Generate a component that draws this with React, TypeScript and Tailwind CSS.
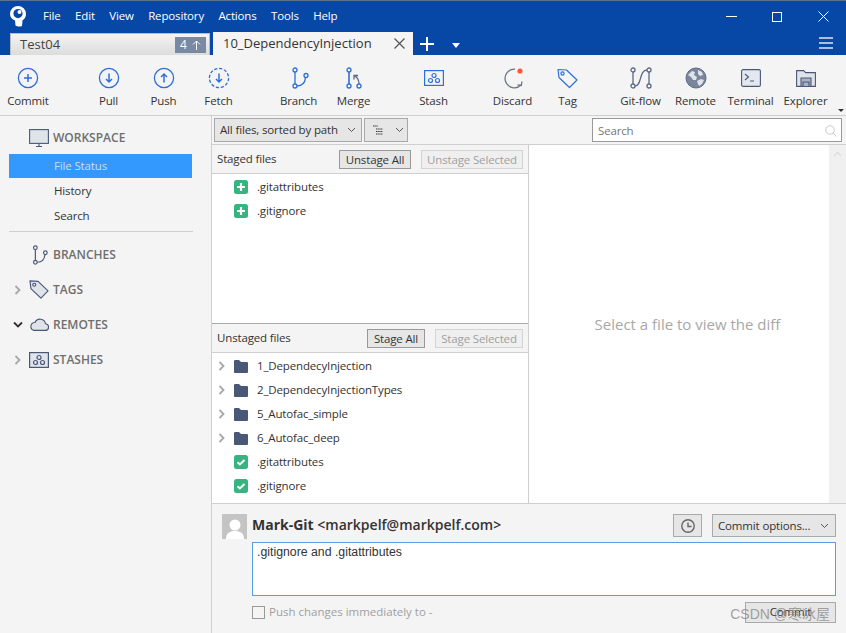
import { ReactNode } from "react";

const blue = "#2f6fd6";
const slate = "#4a5878";

function Circle({ children, dashed }: { children: ReactNode; dashed?: boolean }) {
  return (
    <svg width="22" height="22" viewBox="0 0 22 22" fill="none" stroke={blue} strokeWidth="1.3">
      <circle cx="11" cy="11" r="9.6" strokeDasharray={dashed ? "3.2 1.8" : undefined} />
      {children}
    </svg>
  );
}

function BranchIcon({ color = blue, size = 22 }: { color?: string; size?: number }) {
  return (
    <svg width={size} height={size} viewBox="0 0 22 22" fill="none" stroke={color} strokeWidth="1.3">
      <circle cx="7" cy="3" r="2" />
      <circle cx="7" cy="19" r="2" />
      <circle cx="18" cy="8.5" r="2" />
      <path d="M7 5v12M9 19c5 0 8-3 8.6-8.6" />
    </svg>
  );
}

function StashIcon({ color = blue, fill = "none" }: { color?: string; fill?: string }) {
  return (
    <svg width="20" height="16" viewBox="0 0 20 16" fill={fill} stroke={color} strokeWidth="1.2">
      <rect x="0.6" y="0.6" width="18.8" height="14.8" />
      <circle cx="10" cy="5.5" r="2" />
      <circle cx="6.5" cy="10.5" r="2" />
      <circle cx="13.5" cy="10.5" r="2" />
    </svg>
  );
}

function TagIcon({ color = blue, fill = "none" }: { color?: string; fill?: string }) {
  return (
    <svg width="21" height="21" viewBox="0 0 21 21" fill={fill} stroke={color} strokeWidth="1.2">
      <path d="M1 1.5l8.5.5 10.5 10-7.5 7.5L2 9.5z" strokeLinejoin="round" />
      <circle cx="5.5" cy="5.5" r="1.6" />
    </svg>
  );
}

function ToolItem({ icon, label, w = "w-[55px]", ml = "" }: { icon: ReactNode; label: string; w?: string; ml?: string }) {
  return (
    <div className={`${w} ${ml} flex flex-col items-center shrink-0`}>
      <div className="h-[24px] flex items-center justify-center">{icon}</div>
      <span className="mt-[3px] text-[11.5px] leading-[16px] text-[#333]">{label}</span>
    </div>
  );
}

function Btn({ children, disabled, className = "" }: { children: ReactNode; disabled?: boolean; className?: string }) {
  return (
    <div
      className={`h-[16px] box-content border flex items-center justify-center text-[11.5px] pt-[1px] ${
        disabled ? "border-[#d4d4d4] bg-[#efefef] text-[#a0a0a0]" : "border-[#999] bg-[#e6e6e6] text-[#333]"
      } ${className}`}
    >
      {children}
    </div>
  );
}

function Chevron({ open, light }: { open?: boolean; light?: boolean }) {
  return (
    <svg width="8" height="10" viewBox="0 0 8 10" fill="none" stroke={light ? "#a8a8a8" : "#333"} strokeWidth="1.8" className={open ? "rotate-90" : ""}>
      <path d="M1.5 1l4 4-4 4" />
    </svg>
  );
}

function Caret() {
  return (
    <svg width="9" height="6" viewBox="0 0 9 6" fill="none" stroke="#555" strokeWidth="1">
      <path d="M1 1l3.500 3.500L8 1" />
    </svg>
  );
}

function NavHead({ icon, label, chevron, open }: { icon: ReactNode; label: string; chevron?: boolean; open?: boolean }) {
  return (
    <div className="flex items-center h-[35px]">
      <div className="w-[29px] flex justify-center pl-[6px] shrink-0">{chevron && <Chevron open={open} light={!open} />}</div>
      <div className="w-[20px] flex justify-center shrink-0">{icon}</div>
      <span className="ml-[4px] text-[12px] tracking-normal font-semibold text-[#6f6f6f]">{label}</span>
    </div>
  );
}

function FileRow({ name, kind }: { name: string; kind: "add" | "check" | "folder" }) {
  return (
    <div className="flex items-center h-[24px] pl-[2px]">
      <div className="w-[16px] flex justify-center shrink-0">{kind === "folder" && <Chevron light />}</div>
      <div className="w-[14px] ml-[4px] flex justify-center shrink-0">
        {kind === "folder" && (
          <svg width="14" height="14" viewBox="0 0 14 14" fill={slate}>
            <path d="M0 2a1 1 0 011-1h4l2 2h6a1 1 0 011 1v9a1 1 0 01-1 1H1a1 1 0 01-1-1z" />
          </svg>
        )}
        {kind === "add" && (
          <svg width="14" height="14" viewBox="0 0 14 14">
            <rect width="14" height="14" rx="2.5" fill="#36b37e" />
            <path d="M7 3v8M3 7h8" stroke="#fff" strokeWidth="2.2" />
          </svg>
        )}
        {kind === "check" && (
          <svg width="14" height="14" viewBox="0 0 14 14" fill="none">
            <rect width="14" height="14" rx="2.5" fill="#36b37e" />
            <path d="M3.500 7.200l2.400 2.200 4.600-4.400" stroke="#fff" strokeWidth="2" />
          </svg>
        )}
      </div>
      <span className="ml-[9px] text-[11.5px] text-[#333]">{name}</span>
    </div>
  );
}

const menu = ["File", "Edit", "View", "Repository", "Actions", "Tools", "Help"];
const staged = [".gitattributes", ".gitignore"];
const folders = ["1_DependecyInjection", "2_DependecyInjectionTypes", "5_Autofac_simple", "6_Autofac_deep"];

export default function App() {
  return (
    <div className="w-[846px] h-[633px] overflow-hidden flex flex-col bg-[#f4f4f4] text-[#333] tracking-[-0.15px]" style={{ fontFamily: '"Open Sans", "Noto Sans", sans-serif' }}>
      {/* title bar */}
      <div className="h-[55px] shrink-0 bg-[#0747a6] border-t border-[#5b7391] flex flex-col">
        <div className="h-[31px] flex items-center">
          <svg width="18" height="24" viewBox="0 0 18 24" className="ml-[9px]">
            <path fill="#fff" fillRule="evenodd" d="M9 1a8 8 0 018 8c0 3-1.500 5-3.500 6.300L13 21c-2 1-5 .5-6.500-.5L6 15.600C3 14.500 1 12 1 9a8 8 0 018-8zm0 3a4.600 4.600 0 100 9.200A4.600 4.600 0 009 4z" />
            <circle cx="10.500" cy="7" r="2" fill="#fff" />
          </svg>
          <div className="flex ml-[16px] gap-[14.4px] mb-[1px] text-[11.5px] text-white">
            {menu.map((m) => (
              <span key={m}>{m}</span>
            ))}
          </div>
          <div className="ml-auto flex items-center text-white">
            <div className="w-[46px] flex justify-center">
              <div className="w-[11px] h-px bg-white mt-[-1px]" />
            </div>
            <div className="w-[46px] flex justify-center">
              <div className="w-[10px] h-[10px] border border-white" />
            </div>
            <div className="w-[46px] flex justify-center">
              <svg width="11" height="11" viewBox="0 0 11 11" stroke="#fff">
                <path d="M.5.5l10 10M10.500.5l-10 10" />
              </svg>
            </div>
          </div>
        </div>
        <div className="h-[23px] flex items-end pl-[10px]">
          <div className="w-[200px] h-[22px] bg-gradient-to-b from-[#f4f4f4] to-[#dcdcdc] border-t border-l border-r border-[#bbb] flex items-center pl-[9px] pr-[3px] text-[13px] tracking-normal text-[#444]">
            <span>Test04</span>
            <span className="ml-auto w-[31px] h-[16px] bg-[#7a89a3] text-white text-[12px] flex items-center justify-center gap-[5px]">
              4
              <svg width="9" height="10" viewBox="0 0 9 10" fill="none" stroke="#fff">
                <path d="M4.500 10V1M1 4.500l3.500-3.500L8 4.500" />
              </svg>
            </span>
          </div>
          <div className="ml-[3px] w-[200px] h-[23px] bg-[#f4f4f4] flex items-center pl-[10px] text-[13px] tracking-normal text-[#333]">
            <span>10_DependencyInjection</span>
            <svg width="11" height="11" viewBox="0 0 11 11" stroke="#555" strokeWidth="1.200" className="ml-[22px]">
              <path d="M.5.5l10 10M10.500.5l-10 10" />
            </svg>
          </div>
          <svg width="16" height="16" viewBox="0 0 16 16" stroke="#fff" strokeWidth="2" className="ml-[6px] mb-[3px]">
            <path d="M8 1v14M1 8h14" />
          </svg>
          <div className="ml-[17px] mb-[7px] w-0 h-0 border-x-[4px] border-x-transparent border-t-[5px] border-t-white" />
          <div className="ml-auto mr-[13px] mb-[6px] flex flex-col gap-[3px]">
            <div className="w-[14px] h-[2px] bg-[#a9bfe0]" />
            <div className="w-[14px] h-[2px] bg-[#a9bfe0]" />
            <div className="w-[14px] h-[2px] bg-[#a9bfe0]" />
          </div>
        </div>
      </div>

      {/* toolbar */}
      <div className="h-[61px] shrink-0 border-b border-[#cfcfcf] flex pt-[11px] relative">
        <ToolItem w="w-[56px]" label="Commit" icon={<Circle><path d="M11 7v8M7 11h8" strokeWidth="1.5" /></Circle>} />
        <ToolItem ml="ml-[25px]" label="Pull" icon={<Circle><path d="M11 6.500v8.500M8 12l3 3 3-3" strokeWidth="1.5" /></Circle>} />
        <ToolItem label="Push" icon={<Circle><path d="M11 15.500V7M8 10l3-3 3 3" strokeWidth="1.5" /></Circle>} />
        <ToolItem label="Fetch" icon={<Circle dashed><path d="M11 6.500v8.500M8 12l3 3 3-3" strokeWidth="1.5" /></Circle>} />
        <ToolItem ml="ml-[25px]" label="Branch" icon={<BranchIcon />} />
        <ToolItem
          label="Merge"
          icon={
            <svg width="22" height="22" viewBox="0 0 22 22" fill="none" stroke={blue} strokeWidth="1.3">
              <circle cx="6" cy="3" r="2" />
              <circle cx="6" cy="19" r="2" />
              <circle cx="16" cy="19" r="2" />
              <path d="M6 5v12" strokeWidth="1.6" />
              <path d="M16 17c0-4-1-6-4-8M11 12.500V8.500h4" stroke="#5b6a88" />
            </svg>
          }
        />
        <ToolItem ml="ml-[25px]" label="Stash" icon={<StashIcon />} />
        <ToolItem
          ml="ml-[24px]"
          label="Discard"
          icon={
            <svg width="22" height="22" viewBox="0 0 22 22" fill="none" stroke="#6b7488" strokeWidth="1.3">
              <path d="M13 2.200A9.300 9.300 0 1019 18" />
              <path d="M20 14.500l-.7 4-3.800-.7" />
              <circle cx="18" cy="4" r="2.600" fill="#ff5630" stroke="none" />
            </svg>
          }
        />
        <ToolItem label="Tag" icon={<TagIcon />} />
        <ToolItem
          ml="ml-[18px]"
          label="Git-flow"
          icon={
            <svg width="22" height="22" viewBox="0 0 22 22" fill="none" stroke="#5b6a88" strokeWidth="1.3">
              <circle cx="3" cy="3" r="2" />
              <circle cx="3" cy="19" r="2" />
              <circle cx="19" cy="3" r="2" />
              <circle cx="19" cy="19" r="2" />
              <path d="M3 5v12M19 5v12M5 19c7 0 4-16 12-16" />
            </svg>
          }
        />
        <ToolItem
          label="Remote"
          icon={
            <svg width="22" height="22" viewBox="0 0 22 22">
              <circle cx="11" cy="11" r="10" fill="#7b869c" stroke="#5b6a88" />
              <path fill="#dfe3ea" d="M3 8l4-4 3 1-1 3 3 2-1 3-3 0-2-3zM13 3l4 2 1 3-3 1-2-2zM12 14l4-2 3 1-2 4-3 2-1-2z" />
            </svg>
          }
        />
        <ToolItem
          label="Terminal"
          icon={
            <svg width="20" height="18" viewBox="0 0 20 18" fill="#e4e7ed" stroke="#4a5878" strokeWidth="1.1">
              <rect x="0.6" y="0.6" width="18.8" height="16.8" rx="1.5" />
              <path d="M4 5l3.500 3L4 11M9 12h4" fill="none" />
            </svg>
          }
        />
        <ToolItem
          label="Explorer"
          icon={
            <svg width="20" height="18" viewBox="0 0 20 18" fill="#dfe3ea" stroke="#4a5878" strokeWidth="1.1">
              <path d="M.6 17.400V1.600h7l2 2h9.800v13.800z" />
              <path d="M5 17V9h10v8M7 17v-4h6v4" fill="#aab2c2" />
            </svg>
          }
        />
        <div className="absolute right-[2px] bottom-[3px] w-0 h-0 border-x-[3px] border-x-transparent border-t-[3px] border-t-[#333]" />
      </div>

      <div className="flex flex-1 min-h-0">
        {/* sidebar */}
        <div className="w-[212px] shrink-0 border-r border-[#cfcfcf] pt-[8px]">
          <div className="flex items-center h-[27px] pl-[29px] mb-[3px]">
            <svg width="20" height="18" viewBox="0 0 20 18" fill="#dfe3ea" stroke={slate} strokeWidth="1.1">
              <rect x="0.6" y="0.6" width="18.8" height="13.8" />
              <path d="M7 17.500h6M10 14.500v3" fill="none" />
            </svg>
            <span className="ml-[4px] text-[12px] tracking-normal font-semibold text-[#6f6f6f]">WORKSPACE</span>
          </div>
          <div className="ml-[9px] w-[183px] h-[24px] bg-[#3399ff] flex items-center pl-[45px] text-[11.5px] text-[#c8ddf5]">File Status</div>
          <div className="ml-[54px] h-[25px] flex items-center text-[11.5px]">History</div>
          <div className="ml-[54px] h-[25px] flex items-center text-[11.5px]">Search</div>
          <div className="ml-[9px] w-[184px] h-px bg-[#cfcfcf] mt-[3px] mb-[5px]" />
          <NavHead icon={<BranchIcon color={slate} size={20} />} label="BRANCHES" />
          <NavHead chevron icon={<TagIcon color={slate} fill="#dfe3ea" />} label="TAGS" />
          <NavHead
            chevron
            open
            icon={
              <svg width="19" height="13" viewBox="0 0 19 13" fill="#dfe3ea" stroke={slate} strokeWidth="1.1">
                <path d="M4 12.400h11a3.300 3.300 0 00.5-6.600A5.500 5.500 0 005 4.500a4 4 0 00-1 7.900z" />
              </svg>
            }
            label="REMOTES"
          />
          <NavHead chevron icon={<StashIcon color={slate} fill="#dfe3ea" />} label="STASHES" />
        </div>

        {/* main */}
        <div className="flex-1 min-w-0 flex flex-col">
          <div className="h-[29px] shrink-0 flex items-center border-b border-[#cfcfcf] pl-[2px] pr-[4px]">
            <div className="h-[24px] w-[148px] border border-[#a8a8a8] bg-[#e6e6e6] flex items-center pl-[5px] text-[11.5px] whitespace-nowrap">
              All files, sorted by path
              <span className="ml-auto mr-[5px]"><Caret /></span>
            </div>
            <div className="ml-[2px] h-[24px] w-[44px] border border-[#a8a8a8] bg-[#e6e6e6] flex items-center pl-[8px]">
              <svg width="11" height="10" viewBox="0 0 11 10" stroke="#333">
                <path d="M0 1h5M3 4h7M3 6.500h7M3 9h7" strokeDasharray="1.500 0.700" />
              </svg>
              <span className="ml-[11px]"><Caret /></span>
            </div>
            <div className="ml-auto h-[24px] w-[250px] border border-[#999] bg-white flex items-center pl-[5px] pr-[4px] pt-[1px] text-[11.5px] text-[#777]">
              Search
              <svg width="12" height="12" viewBox="0 0 12 12" fill="none" stroke="#ccc" className="ml-auto">
                <circle cx="5" cy="5" r="4.300" />
                <path d="M8 8l3.500 3.500" />
              </svg>
            </div>
          </div>
          <div className="flex flex-1 min-h-0">
            <div className="w-[317px] shrink-0 border-r border-[#cfcfcf] flex flex-col">
              {/* staged */}
              <div className="h-[29px] flex items-center pl-[5px] pr-[5px] border-b border-[#cfcfcf]">
                <span className="text-[11.5px]">Staged files</span>
                <Btn className="ml-auto w-[70px]">Unstage All</Btn>
                <Btn disabled className="ml-[10px] w-[100px]">Unstage Selected</Btn>
              </div>
              <div className="h-[150px] bg-white pt-[1px] border-b border-[#aaa] box-border">
                {staged.map((f) => (
                  <FileRow key={f} name={f} kind="add" />
                ))}
              </div>
              {/* unstaged */}
              <div className="h-[29px] flex items-center pl-[5px] pr-[5px] border-b border-[#cfcfcf]">
                <span className="text-[11.5px]">Unstaged files</span>
                <Btn className="ml-auto w-[56px]">Stage All</Btn>
                <Btn disabled className="ml-[10px] w-[86px]">Stage Selected</Btn>
              </div>
              <div className="flex-1 bg-white pt-[1px]">
                {folders.map((f) => (
                  <FileRow key={f} name={f} kind="folder" />
                ))}
                {staged.map((f) => (
                  <FileRow key={f} name={f} kind="check" />
                ))}
              </div>
            </div>
            <div className="flex-1 min-w-0 flex bg-white relative">
              <div className="flex-1 flex items-center justify-center text-[15px] tracking-normal text-[#a8a8a8] pl-[17px]">Select a file to view the diff</div>
              <div className="w-[17px] bg-[#f0f0f0] flex justify-center pt-[6px]">
                <svg width="9" height="6" viewBox="0 0 9 6" fill="none" stroke="#ddd" strokeWidth="1.300">
                  <path d="M1 5l3.500-3.500L8 5" />
                </svg>
              </div>
            </div>
          </div>
          {/* commit */}
          <div className="h-[130px] shrink-0 border-t border-[#cfcfcf] pl-[10px] pr-[10px] pt-[10px]">
            <div className="flex items-start">
              <div className="w-[25px] h-[25px] bg-[#c4c4c4] flex items-end justify-center overflow-hidden shrink-0">
                <svg width="22" height="22" viewBox="0 0 22 22" fill="#fff">
                  <circle cx="11" cy="8" r="5.500" />
                  <path d="M2 22c0-6 4-8 9-8s9 2 9 8z" />
                </svg>
              </div>
              <div className="ml-[5px] flex-1 min-w-0">
                <div className="h-[23px] flex items-center">
                  <span className="text-[14px] tracking-normal font-bold text-[#333] mb-[3px]">Mark-Git <span className="font-semibold">&lt;markpelf@markpelf.com&gt;</span></span>
                  <div className="ml-auto h-[23px] w-[29px] border border-[#aaa] bg-[#e6e6e6] flex items-center justify-center">
                    <svg width="14" height="14" viewBox="0 0 14 14" fill="none" stroke="#666" strokeWidth="1.400">
                      <circle cx="7" cy="7" r="6.200" />
                      <path d="M7 3.500V7.500H10.500" />
                    </svg>
                  </div>
                  <div className="ml-[10px] h-[23px] w-[124px] border border-[#aaa] bg-[#e6e6e6] flex items-center pl-[5px] text-[11.5px] whitespace-nowrap">
                    Commit options...
                    <span className="ml-auto mr-[6px]"><Caret /></span>
                  </div>
                </div>
                <div className="mt-[5px] h-[54px] border border-[#5a9de0] bg-white px-[4px] pt-[1px] text-[12.3px] tracking-normal leading-[16px]" style={{ fontFamily: '"Liberation Sans", sans-serif' }}>
                  .gitignore and .gitattributes
                </div>
                <div className="mt-[5px] h-[22px] flex items-center">
                  <div className="w-[13px] h-[13px] border border-[#999] bg-[#f4f4f4]" />
                  <span className="ml-[4px] text-[11.5px] tracking-normal text-[#a0a0a0]">Push changes immediately to -</span>
                  <div className="ml-auto h-[21px] w-[91px] border border-[#aaa] bg-[#e6e6e6] flex items-center justify-center text-[11.5px] relative">
                    Commit
                    <span className="absolute right-[5px] top-[1px] text-[14px] tracking-normal text-[#8a8a8a]/80 whitespace-nowrap" style={{ fontFamily: '"Liberation Sans", "Noto Sans CJK SC", sans-serif' }}>CSDN @寒冰屋</span>
                  </div>
                </div>
              </div>
            </div>
          </div>
        </div>
      </div>
    </div>
  );
}
